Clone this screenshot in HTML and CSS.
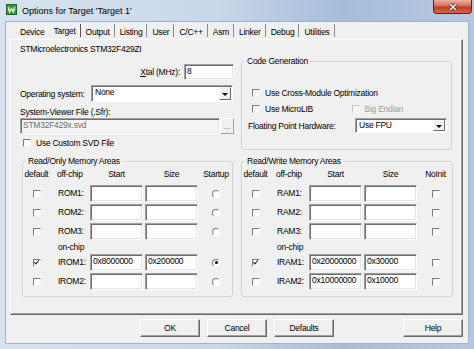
FILE: index.html
```html
<!DOCTYPE html>
<html lang="en">
<head>
    <meta charset="UTF-8">
    <meta name="viewport" content="width=device-width, initial-scale=1.0">
    <title>Options for Target 'Target 1'</title>
    <link rel="stylesheet" href="styles.css">
</head>
<body>
    <div class="window">
        <!-- title bar -->
        <div class="titlebar">
            <svg class="app-icon" width="11" height="11" viewBox="0 0 11 11">
                <rect x="0.5" y="0.5" width="10" height="10" fill="#3a9a3a" stroke="#1f641f"/>
                <path d="M2.2 3 L3.6 8 L5.5 4.8 L7.4 8 L8.8 3" fill="none" stroke="#fff" stroke-width="1.2"/>
            </svg>
            <span class="title">Options for Target 'Target 1'</span>
            <span class="close">
                <svg width="10" height="8" viewBox="0 0 10 8">
                    <path d="M2 1 L8 7 M8 1 L2 7" stroke="#5a1d14" stroke-width="3"/>
                    <path d="M2 1 L8 7 M8 1 L2 7" stroke="#fff" stroke-width="1.6"/>
                </svg>
            </span>
        </div>

        <div class="client">
            <!-- tabs -->
            <div class="tabs">
                <span class="tab first">Device</span>
                <span class="tab active">Target</span>
                <span class="tab">Output</span>
                <span class="tab">Listing</span>
                <span class="tab">User</span>
                <span class="tab">C/C++</span>
                <span class="tab">Asm</span>
                <span class="tab">Linker</span>
                <span class="tab">Debug</span>
                <span class="tab">Utilities</span>
            </div>

            <div class="panel">
                <div class="top">
                    <div class="left-col">
                        <div class="device-name">STMicroelectronics STM32F429ZI</div>
                        <div class="xtal-row">
                            <label><u>X</u>tal (MHz):</label>
                            <input class="txt xtal" type="text" value="8" readonly>
                        </div>
                        <div class="os-row">
                            <label>Operating system:</label>
                            <div class="select os">
                                <span class="val">None</span>
                                <span class="drop"></span>
                            </div>
                        </div>
                        <div class="svd-label">System-Viewer File (.Sfr):</div>
                        <div class="svd-row">
                            <input class="txt svd" type="text" value="STM32F429x.svd" readonly>
                            <span class="browse">...</span>
                        </div>
                        <div class="check-row">
                            <i class="chk"></i>
                            <span>Use Custom SVD File</span>
                        </div>
                    </div>

                    <fieldset class="group code-gen">
                        <legend>Code Generation</legend>
                        <div class="cg-row first">
                            <i class="chk"></i>
                            <span>Use Cross-Module Optimization</span>
                        </div>
                        <div class="cg-row second">
                            <span class="cg-item"><i class="chk"></i><span>Use MicroLIB</span></span>
                            <span class="cg-item disabled"><i class="chk"></i><span>Big Endian</span></span>
                        </div>
                        <div class="fph-row">
                            <label>Floating Point Hardware:</label>
                            <div class="select fpu">
                                <span class="val">Use FPU</span>
                                <span class="drop"></span>
                            </div>
                        </div>
                    </fieldset>
                </div>

                <div class="bottom">
                    <fieldset class="group mem">
                        <legend>Read/Only Memory Areas</legend>
                        <div class="mem-grid">
                            <span class="hd">default</span>
                            <span class="hd off">off-chip</span>
                            <span class="hd field">Start</span>
                            <span class="hd field">Size</span>
                            <span class="hd">Startup</span>

                            <span class="cell"><i class="chk"></i></span>
                            <span class="lbl">ROM1:</span>
                            <input class="txt" type="text" readonly>
                            <input class="txt" type="text" readonly>
                            <span class="cell"><i class="radio"></i></span>

                            <span class="cell"><i class="chk"></i></span>
                            <span class="lbl">ROM2:</span>
                            <input class="txt" type="text" readonly>
                            <input class="txt" type="text" readonly>
                            <span class="cell"><i class="radio"></i></span>

                            <span class="cell"><i class="chk"></i></span>
                            <span class="lbl">ROM3:</span>
                            <input class="txt" type="text" readonly>
                            <input class="txt" type="text" readonly>
                            <span class="cell"><i class="radio"></i></span>

                            <span></span>
                            <span class="lbl onchip">on-chip</span>
                            <span></span><span></span><span></span>

                            <span class="cell"><i class="chk on"></i></span>
                            <span class="lbl">IROM1:</span>
                            <input class="txt" type="text" value="0x8000000" readonly>
                            <input class="txt" type="text" value="0x200000" readonly>
                            <span class="cell"><i class="radio on"></i></span>

                            <span class="cell"><i class="chk"></i></span>
                            <span class="lbl">IROM2:</span>
                            <input class="txt" type="text" readonly>
                            <input class="txt" type="text" readonly>
                            <span class="cell"><i class="radio"></i></span>
                        </div>
                    </fieldset>

                    <fieldset class="group mem ram">
                        <legend>Read/Write Memory Areas</legend>
                        <div class="mem-grid">
                            <span class="hd">default</span>
                            <span class="hd off">off-chip</span>
                            <span class="hd field">Start</span>
                            <span class="hd field">Size</span>
                            <span class="hd">NoInit</span>

                            <span class="cell"><i class="chk"></i></span>
                            <span class="lbl">RAM1:</span>
                            <input class="txt" type="text" readonly>
                            <input class="txt" type="text" readonly>
                            <span class="cell"><i class="chk"></i></span>

                            <span class="cell"><i class="chk"></i></span>
                            <span class="lbl">RAM2:</span>
                            <input class="txt" type="text" readonly>
                            <input class="txt" type="text" readonly>
                            <span class="cell"><i class="chk"></i></span>

                            <span class="cell"><i class="chk"></i></span>
                            <span class="lbl">RAM3:</span>
                            <input class="txt" type="text" readonly>
                            <input class="txt" type="text" readonly>
                            <span class="cell"><i class="chk"></i></span>

                            <span></span>
                            <span class="lbl onchip">on-chip</span>
                            <span></span><span></span><span></span>

                            <span class="cell"><i class="chk on"></i></span>
                            <span class="lbl">IRAM1:</span>
                            <input class="txt" type="text" value="0x20000000" readonly>
                            <input class="txt" type="text" value="0x30000" readonly>
                            <span class="cell"><i class="chk"></i></span>

                            <span class="cell"><i class="chk"></i></span>
                            <span class="lbl">IRAM2:</span>
                            <input class="txt" type="text" value="0x10000000" readonly>
                            <input class="txt" type="text" value="0x10000" readonly>
                            <span class="cell"><i class="chk"></i></span>
                        </div>
                    </fieldset>
                </div>
            </div>

            <!-- dialog buttons -->
            <div class="buttons">
                <span class="btn">OK</span>
                <span class="btn">Cancel</span>
                <span class="btn">Defaults</span>
                <span class="btn help">Help</span>
            </div>
        </div>
    </div>
</body>
</html>
```

FILE: styles.css
```css
/* Windows 7 style dialog */
body {
    margin: 0;
    width: 474px;
    height: 349px;
    overflow: hidden;
    font-family: "Liberation Sans", Arial, sans-serif;
    font-size: 8.5px;
    letter-spacing: -0.25px;
    color: #000;
    background: linear-gradient(90deg, #d6e2ef 0%, #c9d8ea 45%, #a6bcd9 72%, #b5c8e0 100%);
}
.window {
    height: 349px;
    display: flex;
    flex-direction: column;
}

/* title bar */
.titlebar {
    height: 22px;
    flex-shrink: 0;
    display: flex;
    align-items: flex-start;
    padding-left: 6px;
}
.app-icon {
    margin-top: 4px;
}
.title {
    margin: 6px 0 0 5px;
    font-size: 9px;
    letter-spacing: 0;
    line-height: 10px;
}
.close {
    margin-left: auto;
    margin-right: 2px;
    width: 39px;
    height: 14px;
    box-sizing: border-box;
    border: 1px solid #5b241b;
    border-top: none;
    border-radius: 0 0 4px 4px;
    background: linear-gradient(#eeb0a3, #d86c58 45%, #c23a24 55%, #d9634b);
    display: flex;
    align-items: center;
    justify-content: center;
}

/* client area */
.client {
    flex: 1;
    margin: 0 6px 6px 6px;
    background: #f0f0f0;
    box-shadow: 0 0 0 1px #9fb3cb;
    display: flex;
    flex-direction: column;
}
.tabs {
    height: 17px;
    padding: 3px 0 0 9px;
    box-sizing: border-box;
    display: flex;
    align-items: flex-end;
}
.tab {
    line-height: 10px;
    padding: 3px 4px 0 5px;
    margin-bottom: 2px;
    border-right: 1px solid #8a8a8a;
}
.tab.first {
    border-right: none;
}
.tab.active {
    padding-top: 2px;
    padding-bottom: 1px;
    border-right-color: #555;
}
.panel {
    height: 276px;
    box-sizing: border-box;
    margin: 0 5px 0 4px;
    border: 1px solid;
    border-color: #fff #696969 #696969 #fff;
    box-shadow: inset -1px -1px #a0a0a0;
    padding: 4px 9px 0 9px;
}

/* shared controls */
.txt {
    display: block;
    box-sizing: border-box;
    width: 53px;
    height: 17px;
    margin: 0;
    padding: 0 2px 3px;
    font: inherit;
    letter-spacing: inherit;
    color: #000;
    background: #fff;
    border: 1px solid;
    border-color: #a0a0a0 #fff #fff #a0a0a0;
    box-shadow: inset 1px 1px #6e6e6e, inset -1px -1px #e3e3e3;
    outline: none;
}
.chk {
    display: inline-block;
    position: relative;
    width: 8px;
    height: 8px;
    box-sizing: border-box;
    border: 1px solid;
    border-color: #7d7d7d #f2f2f2 #f2f2f2 #7d7d7d;
    background: #fdfdfd;
    flex-shrink: 0;
}
.chk.on::after {
    content: "";
    position: absolute;
    left: 1px;
    top: -1px;
    width: 2px;
    height: 4px;
    border-right: 1.5px solid #222;
    border-bottom: 1.5px solid #222;
    transform: rotate(40deg);
}
.radio {
    display: inline-block;
    position: relative;
    width: 8px;
    height: 8px;
    box-sizing: border-box;
    border-radius: 50%;
    border: 1px solid;
    border-color: #7d7d7d #fff #fff #7d7d7d;
    background: #fdfdfd;
}
.radio.on::after {
    content: "";
    position: absolute;
    left: 1.5px;
    top: 1.5px;
    width: 3px;
    height: 3px;
    border-radius: 50%;
    background: #111;
}
.select {
    box-sizing: border-box;
    display: flex;
    background: #fff;
    border: 1px solid;
    border-color: #a0a0a0 #fff #fff #a0a0a0;
    box-shadow: inset 1px 1px #6e6e6e;
}
.select .val {
    flex: 1;
    padding: 1px 0 0 3px;
    line-height: 11px;
}
.select .drop {
    width: 12px;
    margin: 1px 1px 1px 0;
    box-sizing: border-box;
    background: #f0f0f0;
    border: 1px solid;
    border-color: #f7f7f7 #696969 #696969 #f7f7f7;
    display: flex;
    align-items: center;
    justify-content: center;
}
.select .drop::after {
    content: "";
    border-left: 3px solid transparent;
    border-right: 3px solid transparent;
    border-top: 3px solid #000;
    margin-top: 1px;
}

/* top part */
.top {
    display: flex;
    align-items: flex-start;
}
.left-col {
    width: 214px;
}
.device-name {
    line-height: 10px;
}
.xtal-row {
    margin-top: 10px;
    display: flex;
    justify-content: flex-end;
    align-items: center;
}
.xtal-row label {
    margin-right: 4px;
}
.txt.xtal {
    width: 50px;
    height: 16px;
    padding-bottom: 2px;
}
.os-row {
    margin-top: 5px;
    display: flex;
    align-items: center;
}
.os-row label {
    width: 71px;
}
.select.os {
    width: 142px;
    height: 17px;
}
.svd-label {
    margin-top: 5px;
    line-height: 10px;
}
.svd-row {
    margin-top: 1px;
    display: flex;
}
.txt.svd {
    width: 200px;
    height: 16px;
    padding-bottom: 2px;
    color: #6d6d6d;
    background: #f5f5f5;
}
.browse {
    width: 14px;
    height: 16px;
    box-sizing: border-box;
    border: 1px solid;
    border-color: #fff #a0a0a0 #a0a0a0 #fff;
    color: #8a8a8a;
    text-align: center;
    line-height: 15px;
}
.check-row {
    margin-top: 4px;
    padding-left: 3px;
    line-height: 10px;
    display: flex;
    align-items: center;
}
.check-row .chk {
    margin-right: 5px;
}

/* group boxes */
.group {
    margin: 0;
    padding: 0;
    min-width: 0;
    border: 1px solid #d3d3d3;
    border-radius: 3px;
    box-shadow: inset 1px 1px #fafafa;
}
.group legend {
    padding: 0 2px;
    margin-left: 3px;
    line-height: 10px;
}
.code-gen {
    width: 211px;
    box-sizing: border-box;
    margin: 12px 0 0 7px;
    padding-bottom: 16px;
}
.cg-row {
    display: flex;
    align-items: center;
    line-height: 10px;
    padding-left: 10px;
}
.cg-row .chk {
    margin-right: 5px;
}
.cg-row.first {
    margin-top: 22px;
}
.cg-row.second {
    margin-top: 6px;
}
.cg-item {
    display: flex;
    align-items: center;
    width: 105px;
}
.cg-item.disabled {
    color: #a0a0a0;
}
.cg-item.disabled .chk {
    border-color: #c4c4c4 #f7f7f7 #f7f7f7 #c4c4c4;
    background: #f4f4f4;
}
.fph-row {
    margin-top: 4px;
    padding-left: 6px;
    display: flex;
    align-items: center;
}
.fph-row label {
    width: 107px;
}
.select.fpu {
    width: 92px;
    height: 15px;
}
.select.fpu .val {
    padding-top: 0;
    line-height: 12px;
}

/* memory areas */
.bottom {
    margin-top: 6px;
    padding-left: 2px;
    display: flex;
    gap: 8px;
}
.mem {
    width: 211px;
    box-sizing: border-box;
    padding: 3px 0 6px 0;
}
.mem.ram {
    width: 212px;
}
.mem-grid {
    display: grid;
    grid-template-columns: 27px 40px 55px 55px 1fr;
    grid-template-rows: 14px 17px 17px 17px 10px 17px 17px;
    row-gap: 2px;
}
.hd {
    line-height: 10px;
    text-align: center;
}
.hd.off {
    text-align: left;
    padding-left: 7px;
}
.hd.field {
    width: 53px;
}
.cell {
    display: flex;
    align-items: center;
    justify-content: center;
}
.lbl {
    padding-left: 8px;
    line-height: 17px;
}
.lbl.onchip {
    line-height: 10px;
}

/* dialog buttons */
.buttons {
    margin-top: 4px;
    padding: 0 5px 0 134px;
    display: flex;
    gap: 7px;
}
.btn {
    width: 60px;
    height: 18px;
    box-sizing: border-box;
    border: 1px solid;
    border-color: #fff #696969 #696969 #fff;
    box-shadow: inset -1px -1px #a0a0a0;
    background: #f0f0f0;
    text-align: center;
    line-height: 16px;
}
.btn.help {
    margin-left: auto;
}
```
